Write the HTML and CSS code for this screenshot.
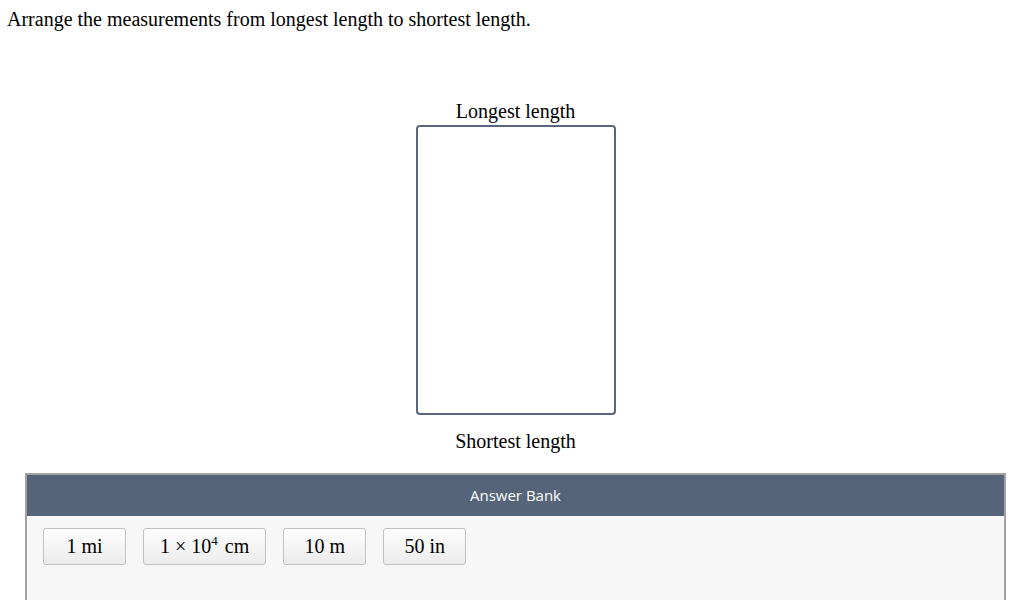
FILE: index.html
```html
<!DOCTYPE html>
<html lang="en">
<head>
    <meta charset="UTF-8">
    <meta name="viewport" content="width=device-width, initial-scale=1.0">
    <title>Ranking Question</title>
    <link rel="stylesheet" href="styles.css">
</head>
<body>
    <p class="prompt">Arrange the measurements from longest length to shortest length.</p>
    <main class="question">
        <div class="ranking">
            <div class="rank-label">Longest length</div>
            <div class="drop-zone"></div>
            <div class="rank-label">Shortest length</div>
        </div>
        <section class="answer-bank">
            <header class="bank-title">Answer Bank</header>
            <div class="bank-items">
                <button class="chip">1 mi</button>
                <button class="chip">1 &times; 10<sup>4</sup> cm</button>
                <button class="chip">10 m</button>
                <button class="chip">50 in</button>
            </div>
        </section>
    </main>
</body>
</html>
```

FILE: styles.css
```css
body {
    margin: 0;
    padding: 0;
    background-color: #fff;
    font-family: "Liberation Serif", "Times New Roman", serif;
    color: #000;
}

.prompt {
    margin: 0;
    padding: 6px 7px 0;
    font-size: 20px;
    line-height: 26px;
}

.question {
    margin: 0 18px 0 25px;
}

.ranking {
    display: flex;
    flex-direction: column;
    align-items: center;
    padding-top: 68px;
}

.rank-label {
    font-size: 20px;
    line-height: 22px;
}

.drop-zone {
    width: 196px;
    height: 286px;
    margin: 3px 0 15px;
    border: 2px solid #59667e;
    border-radius: 4px;
    background-color: #fff;
}

.answer-bank {
    margin-top: 21px;
    border: 2px solid #a3a3a3;
    border-bottom: none;
    background-color: #f7f7f7;
    height: 130px;
}

.bank-title {
    background-color: #566479;
    color: #fff;
    font-family: "Open Sans", sans-serif;
    font-size: 15px;
    text-align: center;
    height: 41px;
    line-height: 41px;
}

.bank-items {
    display: flex;
    gap: 17px;
    padding: 12px 16px;
}

.chip {
    min-width: 83px;
    height: 37px;
    padding: 0 16px;
    border: 1px solid #c2c2c2;
    border-radius: 3px;
    background: linear-gradient(#fdfdfd, #ececec);
    font-family: "Liberation Serif", "Times New Roman", serif;
    font-size: 20px;
    color: #000;
}

.chip sup {
    font-size: 13px;
    line-height: 0;
    margin-right: 2px;
}
```
